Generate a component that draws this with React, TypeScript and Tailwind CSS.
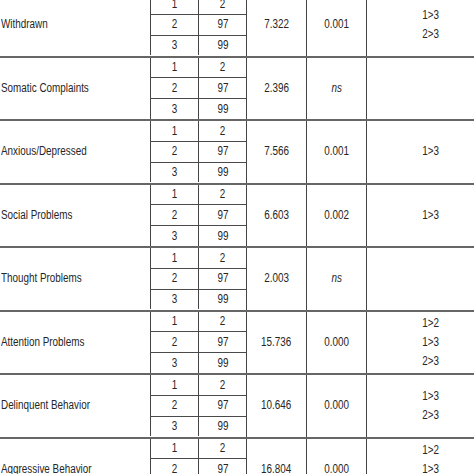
import React from "react";

interface ScaleRow {
  label: string;
  f: string;
  p: string;
  italicP?: boolean;
  posthoc: string[];
}

const rows: ScaleRow[] = [
  { label: "Withdrawn", f: "7.322", p: "0.001", posthoc: ["1>3", "2>3"] },
  { label: "Somatic Complaints", f: "2.396", p: "ns", italicP: true, posthoc: [] },
  { label: "Anxious/Depressed", f: "7.566", p: "0.001", posthoc: ["1>3"] },
  { label: "Social Problems", f: "6.603", p: "0.002", posthoc: ["1>3"] },
  { label: "Thought Problems", f: "2.003", p: "ns", italicP: true, posthoc: [] },
  { label: "Attention Problems", f: "15.736", p: "0.000", posthoc: ["1>2", "1>3", "2>3"] },
  { label: "Delinquent Behavior", f: "10.646", p: "0.000", posthoc: ["1>3", "2>3"] },
  { label: "Aggressive Behavior", f: "16.804", p: "0.000", posthoc: ["1>2", "1>3", "2>3"] },
];

const groups = [
  { g: "1", n: "2" },
  { g: "2", n: "97" },
  { g: "3", n: "99" },
];

// narrow-looking text: Arial squeezed horizontally
function Narrow({ children, left, italic }: { children: React.ReactNode; left?: boolean; italic?: boolean }) {
  return (
    <span
      className={`inline-block whitespace-nowrap scale-x-[0.79] ${left ? "origin-left" : "origin-center"} ${
        italic ? "italic" : ""
      }`}
    >
      {children}
    </span>
  );
}

export default function App() {
  return (
    <div className="w-[474px] h-[474px] overflow-hidden bg-white">
      <div
        className="w-[494px] -mt-[8px] text-[12.5px] text-[#262626]"
        style={{ fontFamily: '"Liberation Sans", Arial, sans-serif' }}
      >
        {rows.map((row) => (
          <div key={row.label} className="flex h-[63.5px] border-t-2 border-[#666]">
            {/* Scale name */}
            <div className="w-[150px] flex items-center pl-[1px]">
              <Narrow left>{row.label}</Narrow>
            </div>

            {/* Group / N */}
            <div className="w-[96px] flex flex-col">
              {groups.map((grp, i) => (
                <div
                  key={grp.g}
                  className={`flex flex-1 ${i < 2 ? "border-b-[1.5px] border-[#4a4a4a]" : ""}`}
                >
                  <div className="w-[48px] border-l border-[#444] flex items-center justify-center">
                    <Narrow>{grp.g}</Narrow>
                  </div>
                  <div className="w-[48px] border-l border-[#444] flex items-center justify-center">
                    <Narrow>{grp.n}</Narrow>
                  </div>
                </div>
              ))}
            </div>

            {/* F */}
            <div className="w-[60px] border-l border-[#444] flex items-center justify-center">
              <Narrow>{row.f}</Narrow>
            </div>

            {/* p */}
            <div className="w-[60px] border-l border-[#444] flex items-center justify-center">
              <Narrow italic={row.italicP}>{row.p}</Narrow>
            </div>

            {/* Post hoc */}
            <div className="w-[128px] border-l border-[#444] flex flex-col items-center justify-center leading-[19px]">
              {row.posthoc.map((ph) => (
                <Narrow key={ph}>{ph}</Narrow>
              ))}
            </div>
          </div>
        ))}
      </div>
    </div>
  );
}
